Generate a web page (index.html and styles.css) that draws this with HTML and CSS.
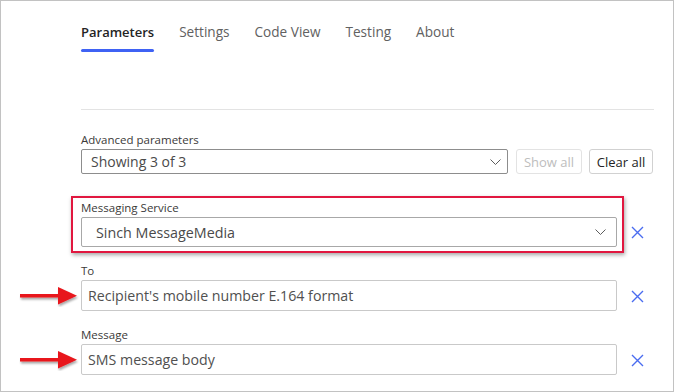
FILE: index.html
```html
<!DOCTYPE html>
<html>
<head>
<meta charset="utf-8">
<link rel="stylesheet" href="styles.css">
</head>
<body>
<div class="frame">
  <nav class="tabs">
    <span class="tab active">Parameters</span>
    <span class="tab">Settings</span>
    <span class="tab">Code View</span>
    <span class="tab">Testing</span>
    <span class="tab">About</span>
  </nav>
  <div class="divider"></div>

  <div class="adv">
    <div class="label">Advanced parameters</div>
    <div class="adv-row">
      <div class="select adv-select">
        <span>Showing 3 of 3</span>
        <svg class="chev" width="11" height="6" viewBox="0 0 11 6"><path d="M0.5 0.5 L5.5 5.5 L10.5 0.5" fill="none" stroke="#5c5c5c" stroke-width="1"/></svg>
      </div>
      <button class="btn disabled">Show all</button>
      <button class="btn">Clear all</button>
    </div>
  </div>

  <div class="field first">
    <div class="field-main">
      <div class="highlight"></div>
      <div class="label">Messaging Service</div>
      <div class="select big">
        <span>Sinch MessageMedia</span>
        <svg class="chev" width="11" height="6" viewBox="0 0 11 6"><path d="M0.5 0.5 L5.5 5.5 L10.5 0.5" fill="none" stroke="#5c5c5c" stroke-width="1"/></svg>
      </div>
    </div>
    <svg class="x" width="13" height="13" viewBox="0 0 13 13"><path d="M1 1 L12 12 M12 1 L1 12" stroke="#4a6cf0" stroke-width="1.4" fill="none"/></svg>
  </div>

  <div class="field">
    <div class="field-main">
      <div class="label">To</div>
      <div class="input">Recipient's mobile number E.164 format</div>
      <svg class="arrow" width="60" height="22" viewBox="0 0 60 22"><defs><filter id="sh" x="-20%" y="-40%" width="140%" height="180%"><feDropShadow dx="1" dy="2" stdDeviation="1" flood-color="#000" flood-opacity="0.35"/></filter></defs><g filter="url(#sh)"><rect x="1" y="9" width="40" height="3.5" fill="#e8141c"/><path d="M39 2 L58 10.75 L39 19.5 Z" fill="#e8141c"/></g></svg>
    </div>
    <svg class="x" width="13" height="13" viewBox="0 0 13 13"><path d="M1 1 L12 12 M12 1 L1 12" stroke="#4a6cf0" stroke-width="1.4" fill="none"/></svg>
  </div>

  <div class="field">
    <div class="field-main">
      <div class="label">Message</div>
      <div class="input">SMS message body</div>
      <svg class="arrow" width="60" height="22" viewBox="0 0 60 22"><g filter="url(#sh)"><rect x="1" y="9" width="40" height="3.5" fill="#e8141c"/><path d="M39 2 L58 10.75 L39 19.5 Z" fill="#e8141c"/></g></svg>
    </div>
    <svg class="x" width="13" height="13" viewBox="0 0 13 13"><path d="M1 1 L12 12 M12 1 L1 12" stroke="#4a6cf0" stroke-width="1.4" fill="none"/></svg>
  </div>
</div>
</body>
</html>
```

FILE: styles.css
```css
* { box-sizing: border-box; }
html, body { margin: 0; padding: 0; background: #fff; }
body { font-family: "Open Sans", "Noto Sans", sans-serif; color: #323130; }

.frame {
  width: 674px;
  height: 392px;
  border: 1px solid #c2c2c2;
  padding: 21px 0 0 80px;
  overflow: hidden;
}

.tabs { display: flex; gap: 25px; height: 31px; }
.tab {
  position: relative;
  font-size: 13.6px;
  line-height: 20px;
  color: #616161;
  height: 20px;
}
.tab.active { color: #242424; font-weight: 600; font-size: 13px; }
.tab.active::after {
  content: "";
  position: absolute;
  left: 0; right: 0;
  top: 27px;
  height: 3px;
  border-radius: 2px;
  background: #3f62f4;
}

.divider { margin-top: 56px; width: 573px; height: 1px; background: #e3e3e3; }

.label { font-size: 11.5px; line-height: 16px; color: #3b3a39; }

.adv { margin-top: 22px; }
.adv-row { display: flex; margin-top: 1px; }

.select {
  display: flex;
  align-items: center;
  justify-content: space-between;
  border: 1px solid #8d8d8d;
  border-radius: 2px;
  font-size: 14px;
  color: #4a4a4a;
}
.adv-select { width: 427px; height: 25px; padding: 0 6px 0 9px; }
.chev { flex: none; }

.btn {
  height: 25px;
  font-family: inherit;
  font-size: 13px;
  background: #fff;
  border: 1px solid #d1d1d1;
  border-radius: 3px;
  color: #242424;
  padding: 0;
}
.btn.disabled { width: 66px; margin-left: 8px; color: #bdbdbd; border-color: #e3e3e3; }
.btn:last-child { width: 64px; margin-left: 7px; }

.field { display: flex; align-items: flex-end; margin-top: 16px; }
.field.first { margin-top: 26px; }
.field-main { position: relative; width: 536px; }
.x { flex: none; margin-left: 14px; margin-bottom: 8px; }

.big {
  margin-top: 1px;
  height: 30px;
  padding: 0 10px 0 14px;
  border-color: #a8a8a8;
  font-size: 14.3px;
}

.input {
  margin-top: 1px;
  height: 31px;
  border: 1px solid #c9c9c9;
  border-radius: 2px;
  padding: 0 6px;
  font-size: 14.2px;
  line-height: 29px;
  color: #505050;
}

.highlight {
  position: absolute;
  top: -4px; left: -10px; right: -7px; bottom: -6px;
  border: 2px solid #e1173f;
  box-shadow: 1px 2px 4px rgba(0, 0, 0, 0.35);
  pointer-events: none;
}

.arrow { position: absolute; left: -62px; bottom: 4px; }
```
